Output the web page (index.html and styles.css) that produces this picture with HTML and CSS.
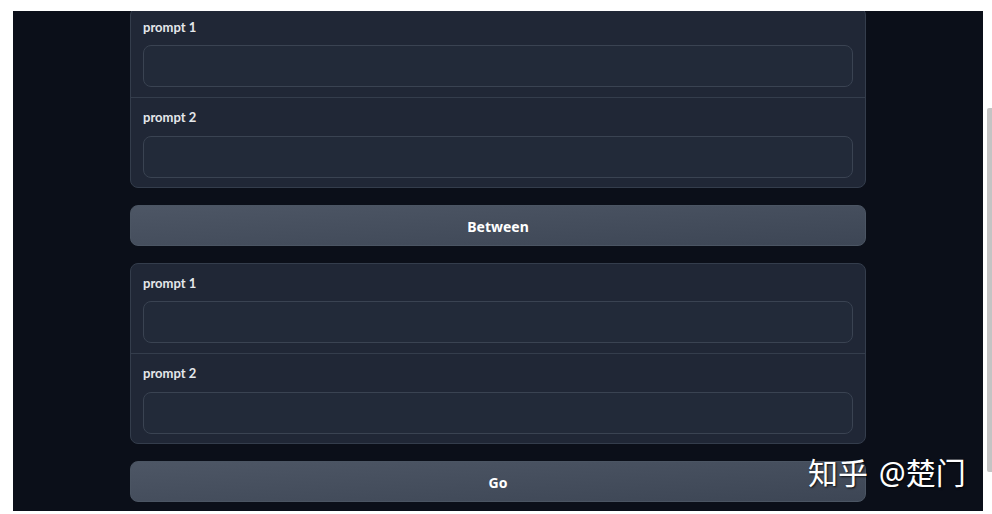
FILE: index.html
```html
<!DOCTYPE html>
<html lang="zh-Hans">
<head>
    <meta charset="UTF-8">
    <meta name="viewport" content="width=device-width, initial-scale=1.0">
    <title>prompt between</title>
    <link rel="stylesheet" href="styles.css">
</head>
<body>
    <div class="window">
        <div class="screen">
            <div class="column">
                <div class="panel">
                    <div class="field">
                        <label for="a1">prompt 1</label>
                        <input type="text" id="a1">
                    </div>
                    <div class="field">
                        <label for="a2">prompt 2</label>
                        <input type="text" id="a2">
                    </div>
                </div>
                <button class="btn">Between</button>
                <div class="panel">
                    <div class="field">
                        <label for="b1">prompt 1</label>
                        <input type="text" id="b1">
                    </div>
                    <div class="field">
                        <label for="b2">prompt 2</label>
                        <input type="text" id="b2">
                    </div>
                </div>
                <button class="btn">Go</button>
            </div>
            <!-- 水印 -->
            <div class="watermark">知乎 @楚门</div>
        </div>
        <div class="track">
            <div class="thumb"></div>
        </div>
    </div>
</body>
</html>
```

FILE: styles.css
```css
body {
    margin: 0;
    background-color: #fff;
    font-family: "Noto Sans", "Noto Sans CJK SC", sans-serif;
}
.window {
    display: flex;
    padding: 11px 0 0 13px;
}
.screen {
    position: relative;
    width: 970px;
    height: 500px;
    background-color: #0b0f19;
    overflow: hidden;
}
.track {
    width: 9px;
    height: 503px;
    padding-top: 97px;
    box-sizing: border-box;
}
.thumb {
    width: 5px;
    height: 364px;
    margin-left: 4px;
    background-color: #c4c4c4;
    border-radius: 2px 0 0 2px;
}
.column {
    width: 736px;
    margin: -4px auto 0;
}
.panel {
    background-color: #202736;
    border: 1px solid #343d4c;
    border-radius: 8px;
    overflow: hidden;
}
.field {
    padding: 9px 12px 10px;
}
.field + .field {
    padding-bottom: 9px;
    border-top: 1px solid #343d4c;
}
.field label {
    display: block;
    height: 20px;
    line-height: 20px;
    margin-bottom: 8px;
    font-family: Lato, "Noto Sans", sans-serif;
    font-size: 13px;
    font-weight: 700;
    color: #e5e7eb;
}
.field + .field label {
    margin-bottom: 9px;
}
.field input {
    display: block;
    width: 100%;
    height: 42px;
    box-sizing: border-box;
    background-color: #222a39;
    border: 1px solid #3a4352;
    border-radius: 8px;
    color: #e5e7eb;
}
.btn {
    display: block;
    width: 100%;
    height: 41px;
    margin: 17px 0;
    padding-top: 2px;
    background: linear-gradient(to bottom right, #4d5665, #3d4655);
    border: 1px solid #4b5563;
    border-radius: 8px;
    color: #fff;
    font-family: inherit;
    font-size: 14px;
    font-weight: 700;
}
.watermark {
    position: absolute;
    left: 795px;
    top: 438px;
    font-size: 30px;
    word-spacing: 3px;
    color: #fff;
    text-shadow: 1px 1px 2px rgba(0, 0, 0, 0.8);
}
```
